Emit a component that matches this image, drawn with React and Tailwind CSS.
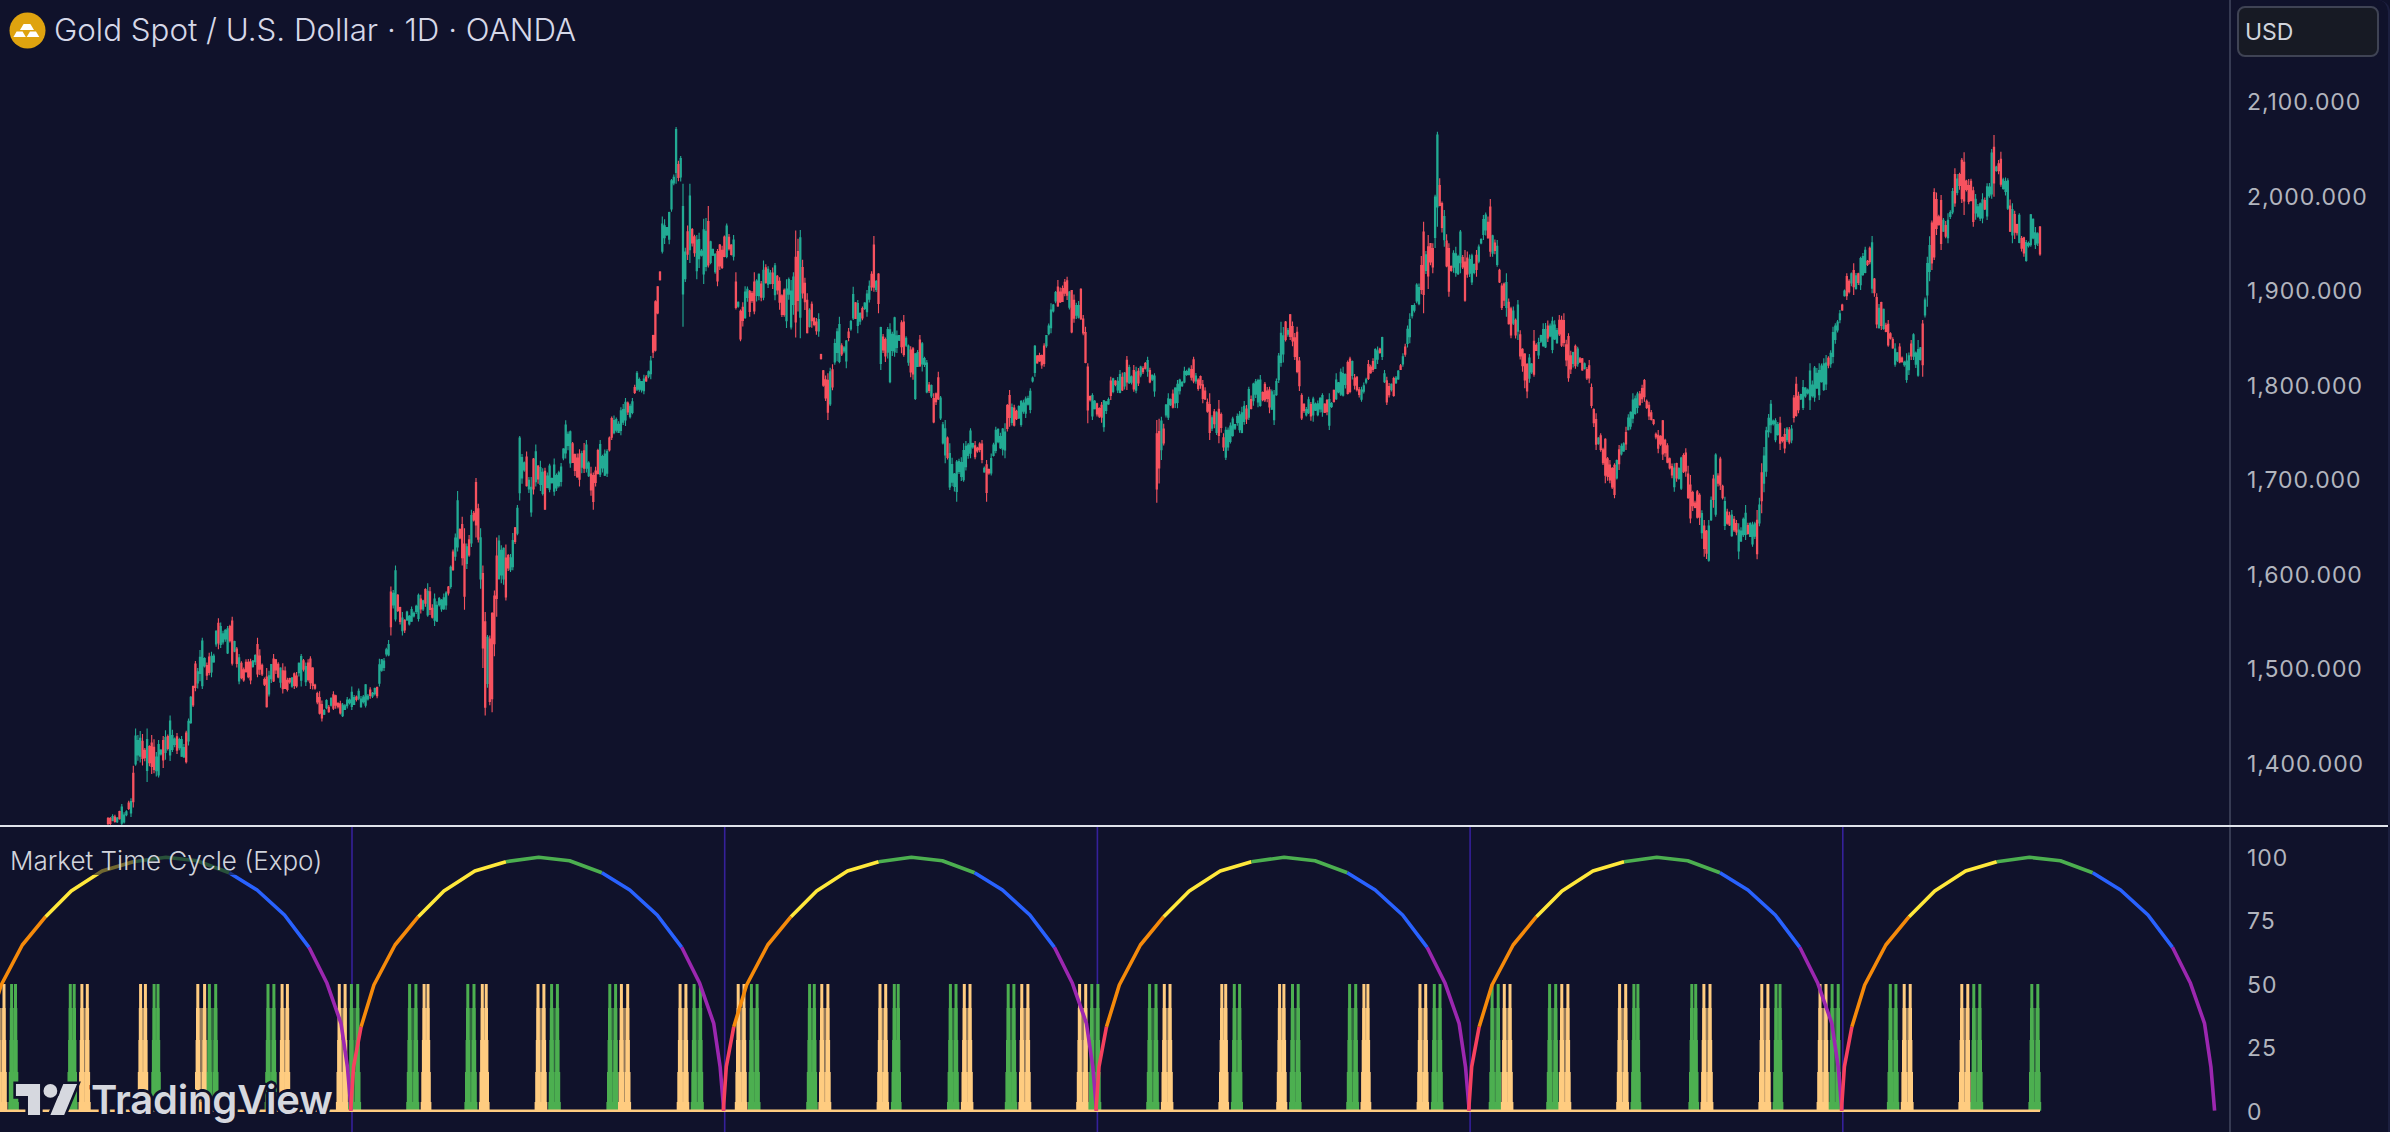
const Z5 = [[215,1540,1558],[240,1512,1558],[255,1500,1540],[260,1430,1520],[268,1350,1430],[290,1350,1465],[310,1375,1455],[332,1322,1420],[345,1360,1405],[365,1355,1425],[375,1280,1340],[385,1205,1270],[395,1155,1265],[415,1185,1240],[428,1113,1180],[445,1130,1190],[455,1110,1215],[470,1190,1255],[490,1200,1255],[505,1155,1240],[522,1220,1305],[535,1190,1250],[555,1210,1275],[575,1230,1265],[590,1190,1260],[610,1195,1265],[625,1270,1320],[632,1290,1335],[655,1270,1310],[670,1295,1325],[690,1260,1310],[715,1255,1305],[738,1260,1285],[745,1200,1260],[760,1160,1195],[768,1045,1150],[775,1000,1120],[790,1100,1150],[820,1060,1120],[840,1038,1110],[850,1060,1130],[875,1055,1095],[885,1000,1050],[895,840,970],[905,895,1000],[912,920,1095],[925,880,960],[933,812,940],[942,920,1050],[948,1000,1220],[952,1100,1322],[958,1150,1300],[965,1100,1315],[972,940,1110],[978,935,1030],[990,955,1075],[1003,930,1010],[1012,870,935],[1020,722,860],[1030,755,830],[1040,810,895],[1048,740,830],[1060,775,840],[1070,790,880],[1085,770,850],[1098,780,830],[1110,688,770],[1120,710,790],[1135,750,830],[1148,730,800],[1162,800,880],[1175,730,810],[1190,750,810],[1200,680,730],[1215,660,720],[1228,640,700],[1240,640,675],[1248,582,625],[1262,590,632],[1275,550,600],[1283,430,540],[1290,400,460],[1300,250,330],[1312,240,310],[1318,170,240],[1325,58,180],[1332,120,175],[1338,180,410],[1340,290,487],[1352,180,350],[1365,290,385],[1378,255,395],[1390,228,360],[1405,320,400],[1425,265,340],[1437,290,345],[1443,370,450],[1452,450,518],[1462,400,470],[1480,370,460],[1495,345,430],[1520,350,430],[1540,385,490],[1560,280,510]];
const Z6 = [[0,390,715],[15,580,700],[35,640,710],[45,810,860],[55,820,960],[75,650,790],[90,720,805],[105,560,660],[115,600,700],[130,570,650],[145,408,575],[152,520,640],[157,680,810],[175,670,850],[185,650,770],[205,645,770],[225,760,900],[237,705,800],[250,780,880],[262,880,970],[270,815,900],[283,960,1090],[295,1030,1170],[305,1080,1205],[320,1030,1145],[335,985,1075],[355,1020,1090],[365,1080,1205],[385,980,1060],[400,970,1075],[410,870,980],[435,900,980],[450,865,940],[460,735,830],[480,730,800],[490,610,700],[505,540,620],[522,530,600],[533,570,700],[552,565,660],[560,680,790],[565,790,970],[575,880,960],[597,900,995],[610,830,900],[625,810,880],[640,768,870],[660,800,880],[680,770,830],[695,820,890],[700,960,1208],[710,950,1080],[720,880,960],[740,840,925],[755,800,850],[772,770,850],[790,840,910],[805,880,1020],[820,900,1030],[835,980,1080],[850,950,1010],[865,920,1000],[880,860,960],[900,825,920],[920,860,940],[930,870,975],[945,665,800],[960,642,720],[975,680,820],[985,880,960],[1005,890,965],[1025,880,950],[1038,880,990],[1050,820,900],[1080,770,880],[1100,860,905],[1115,780,840],[1140,710,780],[1150,830,915],[1165,830,890],[1180,760,800],[1195,640,730],[1210,550,610],[1222,365,640],[1240,430,520],[1250,95,380],[1262,330,440],[1270,430,560],[1272,440,590],[1285,440,530],[1295,390,520],[1305,450,605],[1325,450,530],[1340,345,420],[1352,297,470],[1365,420,500],[1375,550,630],[1385,520,650],[1392,620,715],[1405,600,720],[1420,760,865],[1425,790,895],[1440,690,830],[1455,670,740],[1475,650,760],[1497,640,740],[1505,700,845],[1525,740,800],[1545,780,850],[1560,940,1050],[1568,1000,1055]];
const Z7 = [[460,1015,1150],[470,1080,1150],[480,1090,1195],[490,1035,1110],[505,980,1050],[520,880,970],[530,875,940],[545,837,905],[560,905,960],[578,990,1060],[590,960,1080],[600,1030,1090],[615,1090,1175],[628,1070,1170],[640,1045,1130],[650,1125,1270],[670,1180,1275],[680,1260,1370],[690,1260,1385],[705,1060,1250],[715,1070,1170],[730,1190,1290],[745,1230,1310],[760,1270,1378],[775,1215,1320],[790,1265,1340],[800,1230,1378],[810,1090,1240],[820,980,1130],[830,900,1000],[850,950,1050],[860,985,1060],[875,975,1030],[885,830,950],[905,840,930],[920,790,930],[940,790,900],[955,765,870],[968,680,790],[985,630,670],[1000,520,600],[1015,490,585],[1030,470,570],[1040,440,520],[1060,408,580],[1068,580,685],[1080,605,690],[1095,660,740],[1110,730,800],[1120,730,790],[1135,760,848],[1150,700,780],[1160,720,830],[1172,660,830],[1180,470,620],[1195,265,480],[1210,285,450],[1225,340,430],[1245,205,320],[1265,157,345],[1285,260,380],[1305,280,370],[1315,250,360],[1328,105,290],[1345,155,260],[1360,235,330],[1370,310,430],[1385,340,430],[1395,410,470],[1405,420,485],[1415,342,440],[1432,378,467]];

const ENV = [
  ...Z5.map(([x, h, l]) => [x / 1.96, 100 + h / 2.148, 100 + l / 2.148]),
  ...Z6.map(([x, h, l]) => [800 + x / 1.96, 100 + h / 3, 100 + l / 3]),
  ...Z7.map(([x, h, l]) => [1400 + x / 2.24, 100 + h / 3, 100 + l / 3]),
];

function envAt(x) {
  let i = 0;
  while (i < ENV.length - 2 && ENV[i + 1][0] < x) i++;
  const a = ENV[i];
  const b = ENV[i + 1];
  const t = Math.min(1, Math.max(0, (x - a[0]) / (b[0] - a[0] || 1)));
  return { h: a[1] + (b[1] - a[1]) * t, l: a[2] + (b[2] - a[2]) * t };
}

let seed = 12345;
const rnd = () => {
  seed = (seed * 1664525 + 1013904223) % 4294967296;
  return seed / 4294967296;
};

const STEP = 2.3;
const START = 108;

const buildBars = () => {
  const out = { gw: "", gb: "", rw: "", rb: "" };
  const exact = {};
  ENV.forEach(([x, h, l]) => {
    const idx = Math.round((x - START) / STEP);
    const prev = exact[idx];
    exact[idx] = prev ? [Math.min(prev[0], h), Math.max(prev[1], l)] : [h, l];
  });
  const count = Math.floor((2040 - START) / STEP);
  for (let i = 0; i <= count; i++) {
    const x = START + i * STEP;
    const e = envAt(x);
    const range = Math.max(4, e.l - e.h);
    const r1 = rnd();
    const r2 = rnd();
    const hi = exact[i] ? exact[i][0] : e.h + r1 * range * 0.48;
    const lo = exact[i] ? exact[i][1] : e.l - r2 * range * 0.48;
    const bottom = Math.max(lo, hi + 6);
    const span = bottom - hi;
    const top = hi + rnd() * span * 0.25;
    const bot = bottom - rnd() * span * 0.25;
    const p = envAt(x - 6);
    const n = envAt(x + 6);
    const up = n.h + n.l < p.h + p.l;
    const green = rnd() < (up ? 0.72 : 0.3);
    const xs = x.toFixed(1);
    const wick = `M${xs} ${hi.toFixed(1)}V${bottom.toFixed(1)}`;
    const body = `M${xs} ${top.toFixed(1)}V${bot.toFixed(1)}`;
    if (green) {
      out.gw += wick;
      out.gb += body;
    } else {
      out.rw += wick;
      out.rb += body;
    }
  }
  return out;
};
const BARS = buildBars();

const ARC = [[110,902],[118,770],[138,650],[172,525],[228,405],[290,320],[358,243],[440,183],[523,155],[610,142],[692,152],[778,188],[852,240],[925,315],[990,412],[1038,520],[1075,640],[1092,770],[1102,902]];
const ARC_COLORS = [
  ["#f7415f", 0, 2],
  ["#f58a0b", 2, 5],
  ["#ffe83b", 5, 8],
  ["#4caf50", 8, 11],
  ["#2962ff", 11, 14],
  ["#9c27b0", 14, 18],
];
const CYCLES = [-22.1, 350.6, 723.3, 1096, 1468.7, 1841.4];
const DIVIDERS = [352, 724.7, 1097.4, 1470.1, 1842.8];

const O = "#ffcc80";
const G = "#4caf50";
const SPIKES = [
  [O,-1.5,4],[G,11.6,15.5],[G,70.3,74.2],[O,81.9,87.3],[O,140.6,145.4],[G,154.1,158],[O,197.8,204.6],[G,209.4,215.7],[G,268,273.9],[O,282.1,287.4],[O,339.3,345.1],[G,351.4,357.7],[G,409.6,415.9],[O,424.1,428],[G,467.8,474],[O,482.3,486.2],[O,538,543.9],[G,551.6,557.4],[G,609.8,615.6],[O,621.4,627.7],[O,680.1,685.9],[G,694.1,700.4],[O,738.2,744],[G,751.4,757.1],[G,809.6,814.3],[O,821.8,827.9],[O,880,885.7],[G,894.3,898.2],[G,950.4,956],[O,964.3,970],[G,1008.2,1013.9],[O,1021.8,1027.9],[O,1079.6,1085.7],[G,1091.8,1097.9],[G,1149.6,1156],[O,1164.3,1170],[O,1221.8,1225.7],[G,1234.3,1239.6],[O,1279.6,1283.9],[G,1292.5,1298.2],[G,1349.6,1355.7],[O,1363.9,1367.9],[O,1420,1425.7],[G,1434.3,1440],[G,1492.1,1498.2],[O,1504.3,1510],[G,1549.6,1555.7],[O,1561.8,1567.9],[O,1619.6,1625.7],[G,1633.9,1637.9],[G,1691.8,1695.7],[O,1703.9,1710],[O,1761.8,1767.9],[G,1776,1780],[O,1820,1826],[G,1832.1,1838.2],[G,1890.3,1895.9],[O,1904.2,1910.2],[O,1961.8,1967.8],[G,1973.8,1979.8],[G,2031.8,2037.8],
];

const BASE_Y = 1110.7;
const LEVELS = [
  [984, 1.5],
  [1008, 1.8],
  [1040, 2.2],
  [1072, 2.8],
  [1102, 3.4],
  [BASE_Y, 3.7],
];

const spikePoints = (cx) => {
  const left = [];
  const right = [];
  LEVELS.forEach(([y, w], i) => {
    const next = LEVELS[i + 1];
    if (!next) return;
    left.push(`${(cx - w).toFixed(1)},${y}`, `${(cx - w).toFixed(1)},${next[0]}`);
    right.unshift(`${(cx + w).toFixed(1)},${next[0]}`, `${(cx + w).toFixed(1)},${y}`);
  });
  return [...left, ...right].join(" ");
};

const PRICE_LABELS = ["2,100.000", "2,000.000", "1,900.000", "1,800.000", "1,700.000", "1,600.000", "1,500.000", "1,400.000"];
const OSC_LABELS = ["100", "75", "50", "25", "0"];
const HALO =
  "[text-shadow:3px_0_0_#10122b,-3px_0_0_#10122b,0_3px_0_#10122b,0_-3px_0_#10122b,2px_2px_0_#10122b,-2px_2px_0_#10122b,2px_-2px_0_#10122b,-2px_-2px_0_#10122b]";

function GoldIcon() {
  return (
    <svg width="37" height="37" viewBox="0 0 37 37" className="shrink-0">
      <circle cx="18.5" cy="18.5" r="18" fill="#dfa30f" />
      <path d="M14.6 12h6.8l3.6 6H11z" fill="#fff" />
      <path d="M7.6 19.5h6l3.2 5.5H4.4z" fill="#fff" />
      <path d="M21 19.5h6l3.3 5.5H17.7z" fill="#fff" />
    </svg>
  );
}

function PriceChart() {
  return (
    <svg viewBox="0 0 2229 825" width="2229" height="825" className="block">
      <path d={BARS.gw} stroke="#22ab94" strokeWidth="1.1" fill="none" />
      <path d={BARS.rw} stroke="#f7525f" strokeWidth="1.1" fill="none" />
      <path d={BARS.gb} stroke="#22ab94" strokeWidth="2.3" fill="none" />
      <path d={BARS.rb} stroke="#f7525f" strokeWidth="2.3" fill="none" />
    </svg>
  );
}

function Oscillator() {
  return (
    <svg viewBox="0 827 2229 305" width="2229" height="305" className="block">
      {DIVIDERS.map((x) => (
        <line key={x} x1={x} x2={x} y1="827" y2="1132" stroke="#35209a" strokeWidth="1.6" />
      ))}
      {SPIKES.map(([color, a, b], i) => {
        const lo = Math.min(a, b);
        const hi = Math.max(a, b);
        return (
          <g key={i} fill={color}>
            <rect x={lo} y="1008" width={hi - lo} height="94" opacity="0.55" />
            <rect x={lo} y="1102" width={hi - lo} height="9" />
            <polygon points={spikePoints(a)} />
            <polygon points={spikePoints(b)} />
          </g>
        );
      })}
      <line x1="0" x2="2040" y1={BASE_Y} y2={BASE_Y} stroke="#ffcc80" strokeWidth="2.4" />
      {CYCLES.map((start) =>
        ARC_COLORS.map(([color, from, to]) => (
          <polyline
            key={`${start}-${color}`}
            fill="none"
            stroke={color}
            strokeWidth="3.6"
            strokeLinejoin="round"
            points={ARC.slice(from, to + 1)
              .map(([zx, zy]) => `${(start + (zx - 110) / 2.658).toFixed(1)},${(810 + zy / 3).toFixed(1)}`)
              .join(" ")}
          />
        ))
      )}
    </svg>
  );
}

export default function App() {
  return (
    <div className="relative flex h-[1132px] w-[2390px] flex-col overflow-hidden bg-[#10122b] font-['Inter',sans-serif] text-[#d1d4dc]">
      <div className="flex h-[825px]">
        <div className="relative w-[2229px]">
          <PriceChart />
          <div className="absolute left-[9px] top-[12px] flex items-center gap-[8px]">
            <GoldIcon />
            <span className="text-[31.3px] font-light leading-[37px] text-[#d6d8e8]">Gold Spot / U.S. Dollar · 1D · OANDA</span>
          </div>
        </div>
        <div className="flex flex-1 flex-col rounded-tr-[12px] border-l-2 border-r-2 border-l-[#363a52] border-r-[#1c1f3f]">
          <div className="ml-[6px] mt-[6px] flex h-[51px] w-[142px] items-center rounded-[8px] border-2 border-[#3f4354] bg-[#171a24] pl-[6px] pt-[2px] text-[23px] text-[#d1d4dc]">
            USD
          </div>
          <div className="mt-[33px] flex flex-col gap-[70.5px] pl-[16px]">
            {PRICE_LABELS.map((label) => (
              <div key={label} className="h-[24px] text-[23px] leading-[24px] tracking-[0.9px] text-[#b2b5be]">
                {label}
              </div>
            ))}
          </div>
        </div>
      </div>
      <div className="mr-[2px] h-[2px] bg-[#e0e3eb]" />
      <div className="flex flex-1">
        <div className="relative w-[2229px]">
          <Oscillator />
          <div className="absolute left-[6px] top-[20px] bg-[#10122b]/60 px-[4px] text-[26px] font-light leading-[28px] text-[#d1d4dc]">
            Market Time Cycle (Expo)
          </div>
          <div className="absolute left-[15px] top-[257px] flex items-center gap-[13px]">
            <svg viewBox="0 4 35.5 18" width="63" height="31" className="overflow-visible">
              <path
                d="M14 22H7V11H0V4h14v18ZM28 22h-8l7.5-18h8L28 22Z"
                fill="#d6d8df"
                stroke="#10122b"
                strokeWidth="3"
                paintOrder="stroke"
              />
              <circle cx="20" cy="8" r="4" fill="#d6d8df" stroke="#10122b" strokeWidth="3" paintOrder="stroke" />
            </svg>
            <span className={`text-[40px] font-semibold leading-[31px] tracking-[-0.2px] text-[#d6d8df] ${HALO}`}>TradingView</span>
          </div>
        </div>
        <div className="flex flex-1 flex-col gap-[39.4px] border-l-2 border-r-2 border-l-[#363a52] border-r-[#1c1f3f] pl-[16px] pt-[19px]">
          {OSC_LABELS.map((label) => (
            <div key={label} className="h-[24px] text-[23px] leading-[24px] tracking-[0.9px] text-[#b2b5be]">
              {label}
            </div>
          ))}
        </div>
      </div>
    </div>
  );
}
